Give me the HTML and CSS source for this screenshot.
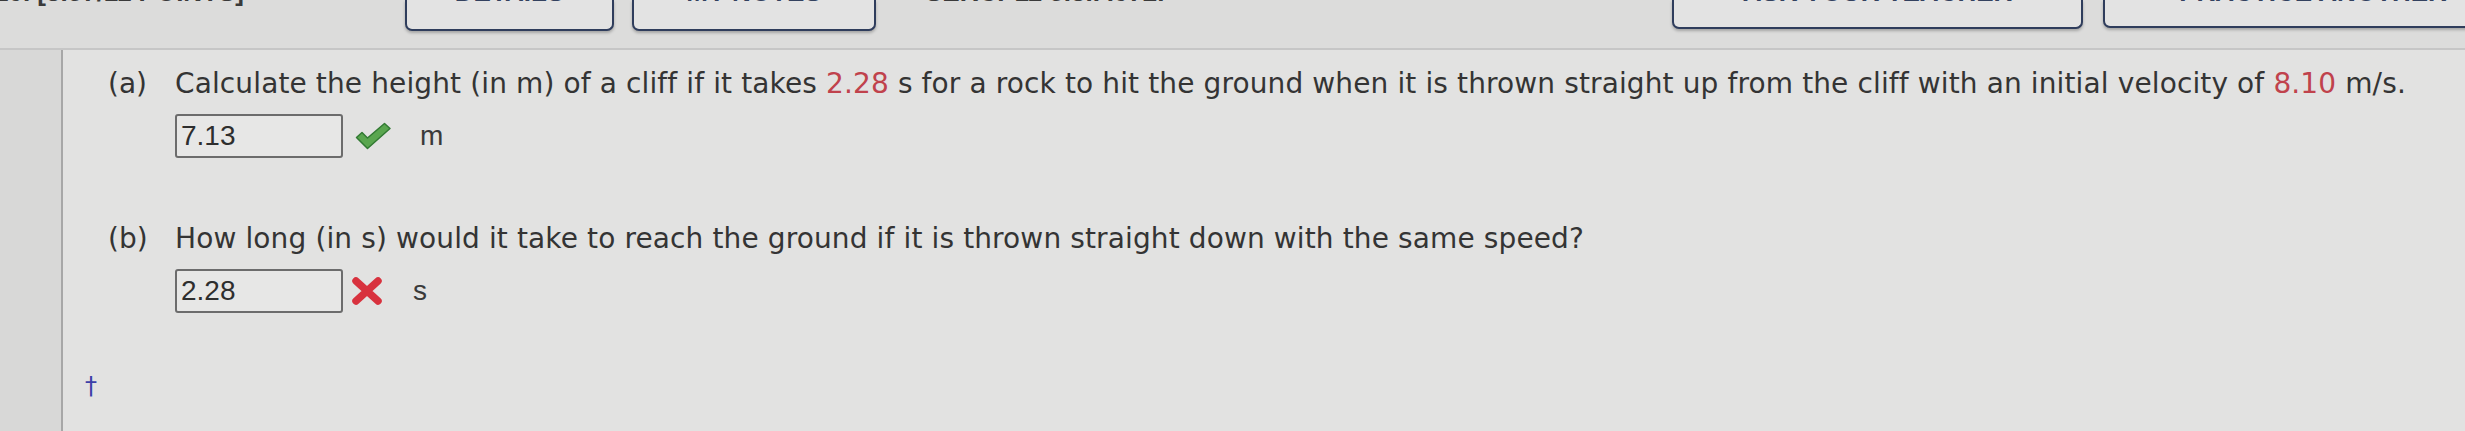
FILE: index.html
```html
<!DOCTYPE html>
<html>
<head>
<meta charset="utf-8">
<link rel="stylesheet" href="styles.css">
</head>
<body>
<div class="topbar">
  <span class="qnum">10. [3.57/11 POINTS]</span>
  <span class="btn btn-details"><span class="btn-text">DETAILS</span></span>
  <span class="btn btn-notes"><span class="btn-text">MY NOTES</span></span>
  <span class="qid">SERCP11 5.3.P.072.</span>
  <span class="btn btn-ask"><span class="btn-text">ASK YOUR TEACHER</span></span>
  <span class="btn btn-practice"><span class="btn-text">PRACTICE ANOTHER</span></span>
</div>
<div class="main">
  <div class="gutter"></div>
  <div class="content">
    <div class="part part-a">
      <span class="label">(a)</span>
      <div class="qbody">
        <p class="prompt">Calculate the height (in m) of a cliff if it takes <span class="num">2.28</span> s for a rock to hit the ground when it is thrown straight up from the cliff with an initial velocity of <span class="num">8.10</span> m/s.</p>
        <div class="answer">
          <span class="box">7.13</span>
          <svg class="mark check" width="38" height="28" viewBox="0 0 38 28"><path d="M2.5 15.5 L8 10.5 L13.5 16 L30.5 1.5 L36 6.5 L13.5 26.5 Z" fill="#5aa64f" stroke="#327a33" stroke-width="1.5" stroke-linejoin="round"/></svg>
          <span class="unit">m</span>
        </div>
      </div>
    </div>
    <div class="part part-b">
      <span class="label">(b)</span>
      <div class="qbody">
        <p class="prompt">How long (in s) would it take to reach the ground if it is thrown straight down with the same speed?</p>
        <div class="answer">
          <span class="box">2.28</span>
          <svg class="mark cross" width="32" height="28" viewBox="0 0 32 28"><path d="M5 4 L27 24 M27 4 L5 24" stroke="#d8323e" stroke-width="7.5" stroke-linecap="round"/></svg>
          <span class="unit">s</span>
        </div>
      </div>
    </div>
    <div class="dagger">†</div>
  </div>
</div>
</body>
</html>
```
FILE: styles.css
```css
* { box-sizing: border-box; }
html, body {
  margin: 0;
  padding: 0;
  width: 2465px;
  height: 431px;
  overflow: hidden;
  background: #e2e2e1;
  font-family: "DejaVu Sans", Verdana, sans-serif;
  color: #343434;
}
.topbar {
  height: 50px;
  display: flex;
  align-items: flex-start;
  background: #dcdcdb;
  border-bottom: 2px solid #c6c6c6;
  overflow: hidden;
  font-family: "Liberation Sans", Arial, sans-serif;
  font-weight: bold;
  font-size: 26px;
  color: #3a3a3a;
  white-space: nowrap;
}
.qnum {
  flex: none;
  width: 357px;
  line-height: 30px;
  margin-top: -23px;
  margin-left: -6px;
}
.qid {
  flex: none;
  width: 371px;
  margin-left: 49px;
  line-height: 30px;
  margin-top: -23px;
}
.btn {
  flex: none;
  height: 31px;
  border: 2px solid #2f3d5c;
  border-top: none;
  border-radius: 0 0 7px 7px;
  background: #e3e3e3;
  box-shadow: 0 2px 3px rgba(0,0,0,0.25);
  display: flex;
  justify-content: center;
  align-items: flex-start;
  color: #33415f;
}
.btn-text {
  line-height: 30px;
  margin-top: -23px;
}
.btn-details { margin-left: 54px; width: 209px; }
.btn-notes { margin-left: 18px; width: 244px; }
.btn-ask { margin-left: 376px; width: 411px; height: 29px; }
.btn-practice { margin-left: 20px; width: 420px; height: 28px; }

.main {
  display: flex;
  height: 381px;
}
.gutter {
  flex: none;
  width: 63px;
  background: #d8d8d7;
  border-right: 2px solid #a7a7a7;
}
.content {
  flex: 1;
  padding-left: 22px;
  padding-top: 17px;
}
.part {
  display: flex;
  padding-left: 23px;
}
.part-b { margin-top: 64px; }
.label {
  flex: none;
  width: 67px;
  font-size: 28px;
  line-height: 34px;
}
.prompt {
  margin: 0;
  font-size: 28px;
  line-height: 34px;
  letter-spacing: 0.12px;
  white-space: nowrap;
}
.num { color: #c0424c; }
.answer {
  display: flex;
  align-items: center;
  margin-top: 13px;
}
.box {
  width: 168px;
  height: 44px;
  border: 2px solid #6c6c6c;
  border-radius: 3px;
  background: #e7e7e6;
  font-family: "Liberation Sans", Arial, sans-serif;
  font-size: 28px;
  line-height: 40px;
  padding-left: 4px;
  color: #2e2e2e;
}
.mark { flex: none; }
.check { margin-left: 11px; }
.cross { margin-left: 8px; }
.unit {
  font-family: "Liberation Sans", Arial, sans-serif;
  font-size: 28px;
  line-height: 40px;
  margin-left: 28px;
  color: #3a3a3a;
}
.cross + .unit { margin-left: 30px; }
.dagger {
  margin-top: 58px;
  font-size: 24px;
  line-height: 30px;
  color: #3c40a8;
}
```
